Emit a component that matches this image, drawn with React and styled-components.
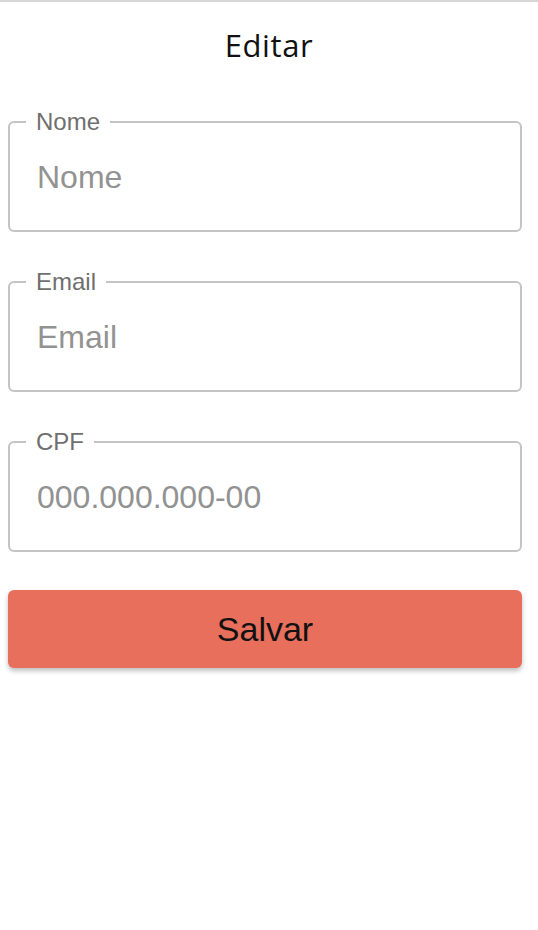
import React from 'react';
import styled, { createGlobalStyle } from 'styled-components'

const Global = createGlobalStyle`
  body {
    margin: 0;
    background: #fff;
    font-family: "Liberation Sans", Arial, sans-serif;
  }
  * { box-sizing: border-box; }
`

const Page = styled.main`
  border-top: 2px solid #d6d6d6;
  min-height: 930px;
`

const Title = styled.h1`
  margin: 0;
  padding-top: 24px;
  text-align: center;
  font-family: "Open Sans", "DejaVu Sans", sans-serif;
  font-weight: 400;
  font-size: 31px;
  line-height: 38px;
  letter-spacing: 0.6px;
  color: #111;
`

const Form = styled.form`
  width: 514px;
  margin: 46px 0 0 8px;
  display: flex;
  flex-direction: column;
  gap: 38px;
`

const Field = styled.fieldset`
  margin: 0;
  padding: 0 16px 10px;
  border: 2px solid #c4c4c4;
  border-radius: 6px;
`

const Label = styled.legend`
  padding: 0 10px;
  font-size: 24px;
  line-height: 24px;
  color: #6f6f6f;
`

const Input = styled.input`
  display: block;
  width: 100%;
  height: 86px;
  border: 0;
  outline: none;
  padding: 0 0 0 11px;
  font-family: "Liberation Sans", Arial, sans-serif;
  font-size: 32px;
  color: #333;
  background: transparent;

  &::placeholder {
    color: #929292;
  }
`

const Button = styled.button`
  height: 78px;
  border: 0;
  border-radius: 6px;
  background: #e86f5b;
  color: #111;
  font-family: "Liberation Sans", Arial, sans-serif;
  font-size: 34px;
  box-shadow: 0 3px 5px rgba(0, 0, 0, 0.25);
  cursor: pointer;
`

function CampoTexto(props) {
    return (
        <Field>
            <Label>{ props.label }</Label>
            <Input placeholder={ props.placeholder } />
        </Field>
    )
}

function App() {
    return (
        <Page>
            <Global />
            <Title>Editar</Title>
            <Form onSubmit={ e => e.preventDefault() }>
                <CampoTexto label="Nome" placeholder="Nome" />
                <CampoTexto label="Email" placeholder="Email" />
                <CampoTexto label="CPF" placeholder="000.000.000-00" />
                <Button type="submit">Salvar</Button>
            </Form>
        </Page>
    )
}
export default App;
